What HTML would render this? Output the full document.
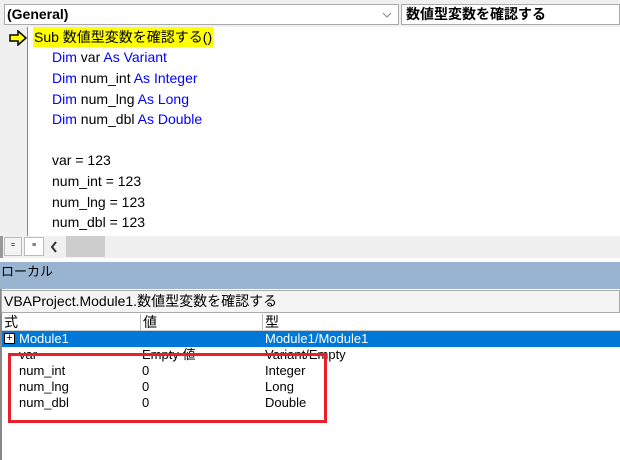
<!DOCTYPE html><html><head><meta charset="utf-8"><style>
*{margin:0;padding:0;box-sizing:border-box}
body{width:620px;height:460px;overflow:hidden;background:#fff;position:relative;font-family:"Liberation Sans","Noto Sans CJK JP",sans-serif;font-size:13px;color:#000}
.a{position:absolute;white-space:nowrap}
.k{color:#0000ff}
.c{font-size:14px;line-height:20px}
</style></head><body>
<div class="a" style="left:0;top:0;width:620px;height:27px;background:#f0f0f0"></div>
<div class="a" style="left:4px;top:4px;width:395px;height:21px;background:#fff;border:1px solid #aaa;font-size:14px;font-weight:bold;line-height:19px;padding-left:2px">(General)</div>
<svg class="a" style="left:382px;top:12px" width="10" height="6"><path d="M1 1l4 4 4-4" fill="none" stroke="#888" stroke-width="1"/></svg>
<div class="a" style="left:401px;top:4px;width:219px;height:21px;background:#fff;border:1px solid #aaa;font-size:14px;font-weight:bold;line-height:19px;padding-left:4px">数値型変数を確認する</div>
<div class="a" style="left:0;top:27px;width:28px;height:209px;background:#f0f0f0;border-right:1px solid #888"></div>
<svg class="a" style="left:8px;top:30px" width="20" height="16"><path d="M2 5h8V1l8 7-8 7v-4H2z" fill="#ffff00" stroke="#000" stroke-width="1.5"/></svg>
<div class="a c" style="left:33px;top:27px;background:#ffff00;padding:0 1px">Sub 数値型変数を確認する()</div>
<div class="a c" style="left:52px;top:47px"><span class="k">Dim</span> var <span class="k">As Variant</span></div>
<div class="a c" style="left:52px;top:68px"><span class="k">Dim</span> num_int <span class="k">As Integer</span></div>
<div class="a c" style="left:52px;top:89px"><span class="k">Dim</span> num_lng <span class="k">As Long</span></div>
<div class="a c" style="left:52px;top:109px"><span class="k">Dim</span> num_dbl <span class="k">As Double</span></div>
<div class="a c" style="left:52px;top:150px">var = 123</div>
<div class="a c" style="left:52px;top:171px">num_int = 123</div>
<div class="a c" style="left:52px;top:192px">num_lng = 123</div>
<div class="a c" style="left:52px;top:212px">num_dbl = 123</div>
<div class="a" style="left:0;top:236px;width:620px;height:22px;background:#f0f0f0"></div>
<div class="a" style="left:0;top:236px;width:3px;height:22px;background:#999"></div>
<div class="a" style="left:4px;top:237px;width:18px;height:19px;border:1px solid #bbb;background:#f4f4f4;font-size:7px;text-align:center;line-height:16px">=</div>
<div class="a" style="left:24px;top:237px;width:20px;height:19px;border:1px solid #bbb;background:#fff;font-size:7px;text-align:center;line-height:16px">≡</div>
<svg class="a" style="left:50px;top:241px" width="8" height="12"><path d="M6 1L2 6l4 5" fill="none" stroke="#333" stroke-width="2"/></svg>
<div class="a" style="left:66px;top:236px;width:39px;height:21px;background:#cdcdcd"></div>
<div class="a" style="left:0;top:262px;width:620px;height:27px;background:#99b4d1;font-size:13px;line-height:20px;padding-left:1px">ローカル</div>
<div class="a" style="left:0;top:289px;width:620px;height:171px;background:#fff;border-left:2px solid #888"></div>
<div class="a" style="left:1px;top:290px;width:619px;height:23px;background:#f4f4f4;border:1px solid #aaa;font-size:14px;line-height:20px;padding-left:2px">VBAProject.Module1.数値型変数を確認する</div>
<div class="a" style="left:2px;top:314px;width:618px;height:17px;background:#fff;border-bottom:1px solid #ccc"></div>
<div class="a" style="left:140px;top:314px;width:1px;height:16px;background:#bbb"></div>
<div class="a" style="left:262px;top:314px;width:1px;height:16px;background:#bbb"></div>
<div class="a" style="left:4px;top:314px;font-size:14px;line-height:16px">式</div>
<div class="a" style="left:143px;top:314px;font-size:14px;line-height:16px">値</div>
<div class="a" style="left:265px;top:314px;font-size:14px;line-height:16px">型</div>
<div class="a" style="left:2px;top:331px;width:618px;height:16px;background:#0078d7;color:#fff;font-size:13px;line-height:16px"></div>
<div class="a" style="left:4px;top:333px;width:11px;height:11px;border:1px solid #000;background:#fff;font-size:11px;line-height:9px;text-align:center;color:#000">+</div>
<div class="a" style="left:19px;top:331px;color:#fff;line-height:16px">Module1</div>
<div class="a" style="left:265px;top:331px;color:#fff;line-height:16px">Module1/Module1</div>
<div class="a" style="left:19px;top:347px;line-height:16px">var</div><div class="a" style="left:142px;top:347px;line-height:16px">Empty 値</div><div class="a" style="left:265px;top:347px;line-height:16px">Variant/Empty</div>
<div class="a" style="left:19px;top:363px;line-height:16px">num_int</div><div class="a" style="left:142px;top:363px;line-height:16px">0</div><div class="a" style="left:265px;top:363px;line-height:16px">Integer</div>
<div class="a" style="left:19px;top:379px;line-height:16px">num_lng</div><div class="a" style="left:142px;top:379px;line-height:16px">0</div><div class="a" style="left:265px;top:379px;line-height:16px">Long</div>
<div class="a" style="left:19px;top:395px;line-height:16px">num_dbl</div><div class="a" style="left:142px;top:395px;line-height:16px">0</div><div class="a" style="left:265px;top:395px;line-height:16px">Double</div>
<div class="a" style="left:8px;top:353px;width:319px;height:70px;border:3px solid #e8202a"></div>
</body></html>
